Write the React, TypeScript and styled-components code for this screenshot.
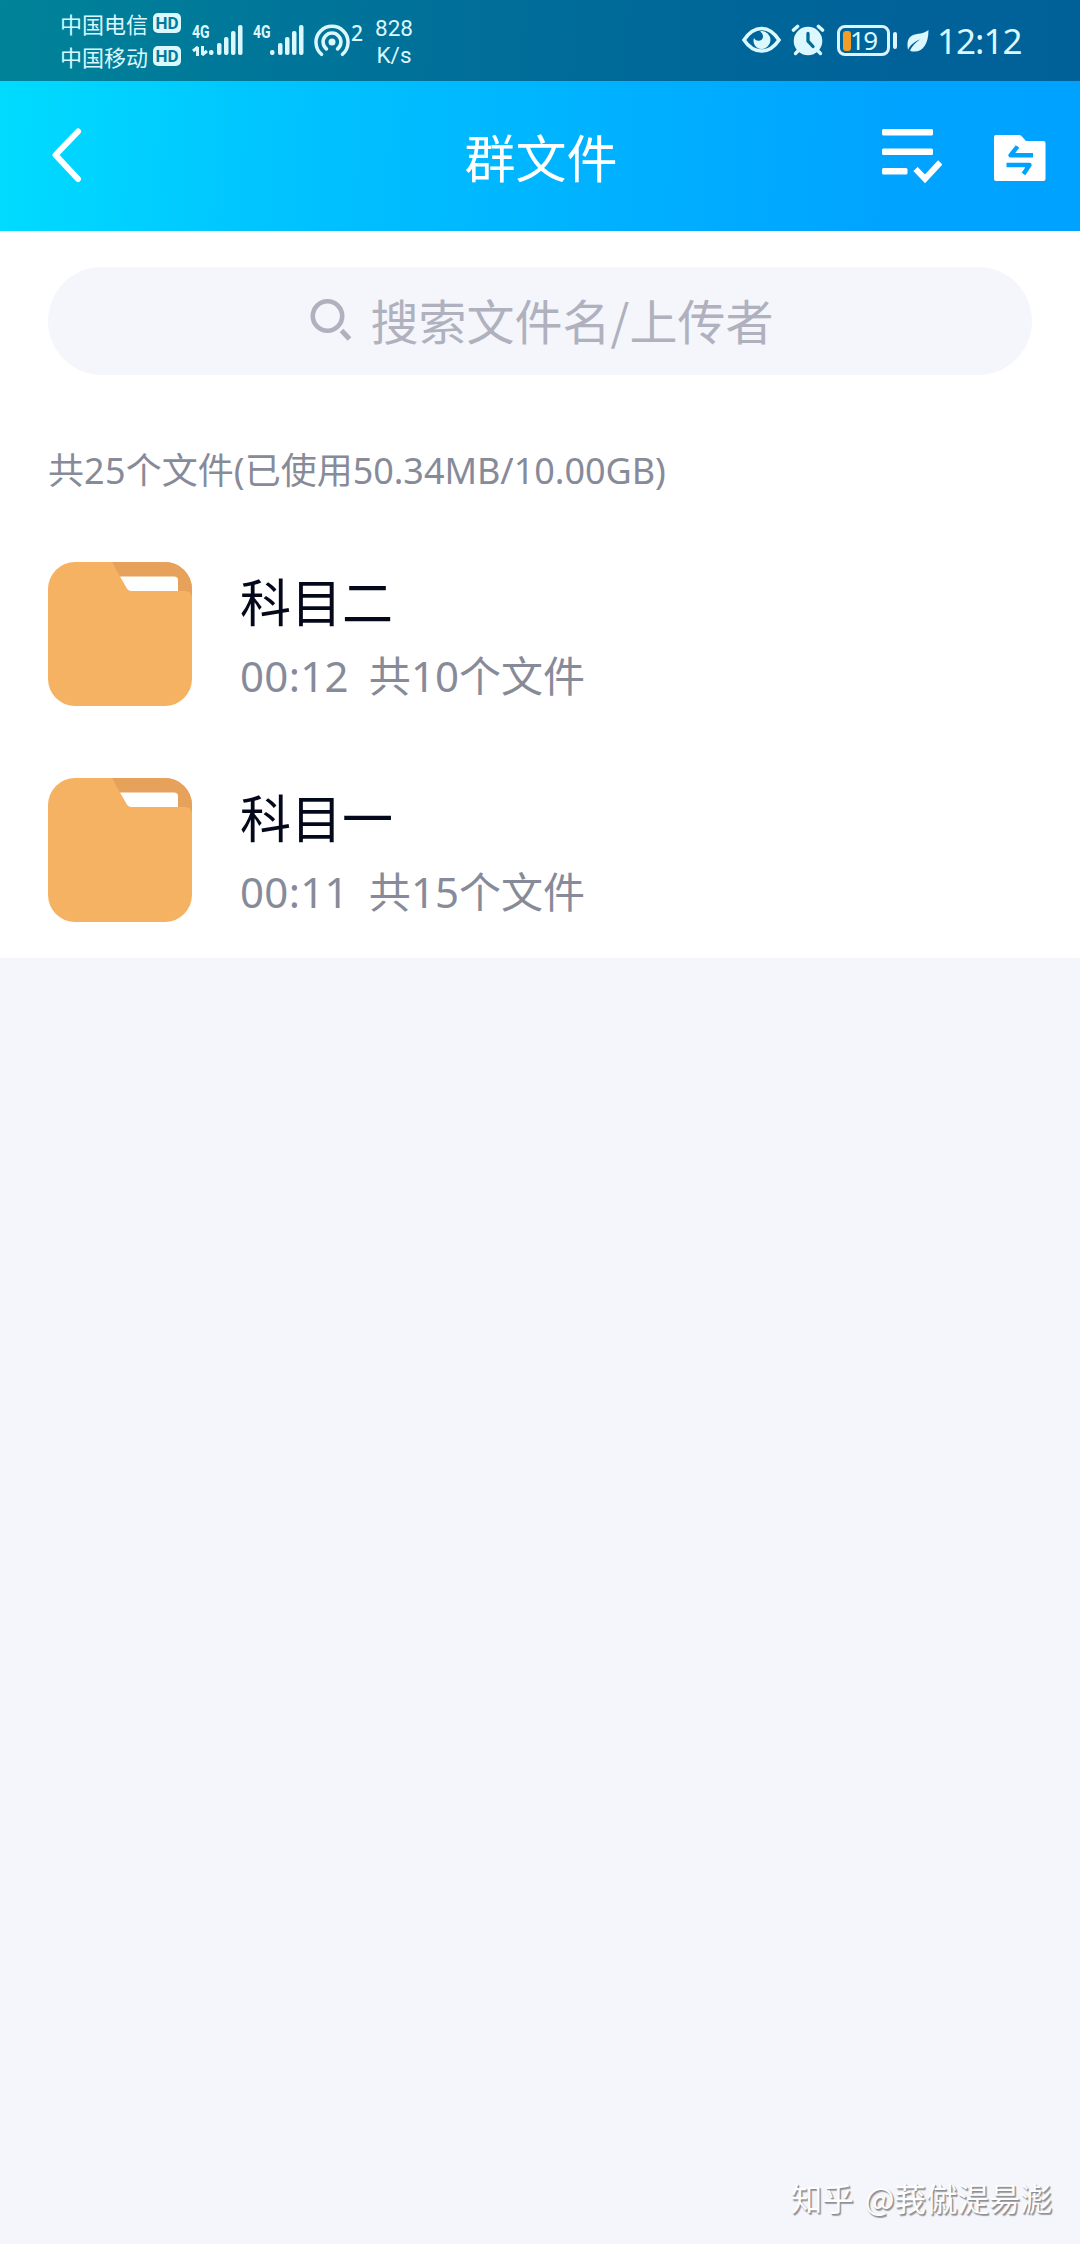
import React from "react";
import styled, { createGlobalStyle } from "styled-components";

const GlobalStyle = createGlobalStyle`
  * { box-sizing: border-box; }
  body {
    margin: 0;
    background: #f4f6fb;
    font-family: "Noto Sans CJK SC", "Noto Sans", sans-serif;
  }
  svg { display: block; flex: none; }
`;

const Screen = styled.div`
  width: 1080px;
  height: 2244px;
  display: flex;
  flex-direction: column;
  overflow: hidden;
  background: #f4f6fb;
`;

const TopArea = styled.div`
  flex: none;
  background: linear-gradient(93deg, #00dcff 0%, #00c3ff 27%, #00b2ff 55%, #00a4ff 82%, #00a2ff 100%);
`;

const StatusBar = styled.div`
  height: 81px;
  padding: 0 58px 0 60px;
  display: flex;
  justify-content: space-between;
  background: rgba(0, 0, 0, 0.4);
  color: #dcf8ff;
`;

const StatusGroup = styled.div`
  display: flex;
  align-items: flex-start;
`;

const Carriers = styled.div`
  display: flex;
  flex-direction: column;
  padding-top: 6px;
`;

const Carrier = styled.div`
  display: flex;
  align-items: center;
  gap: 5px;
  height: 33px;
  font-size: 22px;
  line-height: 32px;
`;

const HdBadge = styled.span`
  width: 28px;
  height: 20px;
  border-radius: 5px;
  background: #dcf8ff;
  color: #007c9b;
  font: 700 17px/20px Roboto, sans-serif;
  text-align: center;
`;

const Signal = styled.div<{ $gap: number }>`
  margin-left: ${(p) => p.$gap}px;
  padding-top: 22px;
  width: 51px;
  display: flex;
`;

const NetLabel = styled.div`
  width: 17px;
  display: flex;
  flex-direction: column;
  gap: 4px;
`;

const NetType = styled.span`
  font: 700 19px/19px Roboto, sans-serif;
  transform: scaleX(0.74);
  transform-origin: left;
`;

const HotspotCount = styled.span`
  margin: 21px 0 0 1px;
  width: 13px;
  font: 500 21px/24px "Noto Sans", sans-serif;
`;

const Speed = styled.div`
  margin-left: 10px;
  padding-top: 15px;
  width: 40px;
  font: 400 22.5px/27px Roboto, sans-serif;
  text-align: center;
`;

const Battery = styled.div`
  margin: 25px 0 0 12px;
  width: 53px;
  height: 31px;
  border: 3px solid #dff3ff;
  border-radius: 8px;
  padding-left: 3px;
  display: flex;
  align-items: center;
`;

const Charge = styled.span`
  flex: none;
  width: 8px;
  height: 20px;
  border-radius: 3px;
  background: #f59c25;
`;

const Percent = styled.span`
  margin-left: -1px;
  font: 400 26px/25px "Noto Sans", sans-serif;
  letter-spacing: -1.6px;
`;

const BatteryCap = styled.span`
  flex: none;
  margin: 32px 0 0 3px;
  width: 4px;
  height: 17px;
  border-radius: 2px;
  background: #dff3ff;
`;

const Clock = styled.span`
  margin-top: 17px;
  margin-left: 8px;
  width: 85px;
  font: 400 35px/48px "Noto Sans", sans-serif;
  white-space: nowrap;
  letter-spacing: -1px;
`;

const IconSlot = styled.div<{ $top: number; $left?: number }>`
  margin-top: ${(p) => p.$top}px;
  margin-left: ${(p) => p.$left ?? 0}px;
`;

const TitleBar = styled.header`
  height: 150px;
  padding: 0 34px 0 48px;
  display: grid;
  grid-template-columns: 1fr auto 1fr;
  align-items: center;
  color: #fff;
`;

const Title = styled.h1`
  margin: 0;
  transform: translateX(-6px);
  font-size: 51px;
  font-weight: 400;
  line-height: 74px;
`;

const Actions = styled.div`
  display: flex;
  justify-content: flex-end;
  gap: 52px;
`;

const Content = styled.main`
  flex: none;
  height: 727px;
  padding: 36px 48px;
  background: #fff;
`;

const SearchBox = styled.div`
  height: 108px;
  padding-left: 3px;
  border-radius: 54px;
  background: #f4f6fb;
  color: #b0b1be;
  display: flex;
  align-items: center;
  justify-content: center;
  gap: 19px;
`;

const Placeholder = styled.span`
  font-size: 48px;
  line-height: 68px;
  padding-bottom: 5px;
`;

const Summary = styled.p`
  margin: 67px 0 0;
  height: 52px;
  font-size: 36px;
  line-height: 52px;
  color: #878b99;
  white-space: nowrap;
`;

const Latin = styled.span<{ $spacing?: number }>`
  font-family: "Noto Sans", sans-serif;
  line-height: 0;
  letter-spacing: ${(p) => p.$spacing ?? 0}px;
`;

const FileList = styled.div`
  margin-top: 68px;
  display: flex;
  flex-direction: column;
  gap: 72px;
`;

const FileRow = styled.div`
  height: 144px;
  display: flex;
  gap: 48px;
`;

const FileText = styled.div`
  display: flex;
  flex-direction: column;
  padding-top: 1px;
  white-space: nowrap;
`;

const FileName = styled.div`
  font-size: 51px;
  line-height: 74px;
  color: #03081a;
`;

const FileMeta = styled.div`
  font-size: 42px;
  line-height: 74px;
  color: #878b99;
`;

const Time = styled(Latin)`
  margin-right: 20px;
`;

const Footer = styled.footer`
  margin-top: auto;
  padding: 0 28px 23px;
  text-align: right;
  font-size: 31.5px;
  line-height: 48px;
  word-spacing: 4px;
  color: #fdfdfe;
  text-shadow: 1px 1px 1px #8c8d92, 1.5px 1.5px 1px #a2a3a8;
`;

const bars = [
  [0, 28, 5],
  [8, 21, 12],
  [15, 15, 18],
  [22, 9, 24],
  [29, 3, 30],
];

function SignalMeter({ gap, data }: { gap: number; data?: boolean }) {
  return (
    <Signal $gap={gap}>
      <NetLabel>
        <NetType>4G</NetType>
        {data && (
          <svg width="16" height="12" viewBox="0 0 16 12" fill="none" stroke="currentColor" strokeWidth="3">
            <path d="M5.5 11V2M6 2 1 6M10.500 1v9M10 10l5-4" />
          </svg>
        )}
      </NetLabel>
      <svg width="34" height="34" viewBox="0 0 34 34" fill="currentColor">
        {bars.map(([x, y, h]) => (
          <rect key={x} x={x} y={y} width="4.500" height={h} rx="2" />
        ))}
      </svg>
    </Signal>
  );
}

function Hotspot() {
  return (
    <svg width="36" height="34" viewBox="0 0 36 34" fill="none" stroke="currentColor" strokeWidth="3.500" strokeLinecap="round">
      <circle cx="18" cy="18" r="3.500" fill="currentColor" stroke="none" />
      <path d="M12.500 25a8.900 8.900 0 1 1 11 0" />
      <path d="M7.500 30.300a16 16 0 1 1 21 0" />
    </svg>
  );
}

function Eye() {
  return (
    <svg width="39" height="28" viewBox="0 0 39 28" fill="none" stroke="currentColor" strokeWidth="3.600">
      <path d="M2 14C7 6.500 13 2.500 19.500 2.500S32 6.500 37 14c-5 7.500-11 11-17.500 11S7 21.500 2 14Z" />
      <path d="M18 5.500c4 2.500 4 7.500 0 9-3 .8-5-.5-6-2.500-2 5 2 11 7.500 11a9 9 0 0 0 0-18Z" fill="currentColor" stroke="none" />
    </svg>
  );
}

function Alarm() {
  return (
    <svg width="34" height="32" viewBox="0 0 34 32" fill="none" stroke="currentColor" strokeLinecap="round">
      <circle cx="17" cy="17" r="14.300" fill="currentColor" stroke="none" />
      <path d="m2.500 6 4-3.500M31.500 6l-4-3.500" strokeWidth="3.600" />
      <path d="m4.500 29.500 4-4M29.500 29.500l-4-4" strokeWidth="3.300" />
      <path d="M17 9.500V17l5 5.500" stroke="#006c99" strokeWidth="3.300" />
    </svg>
  );
}

function Leaf() {
  return (
    <svg width="22" height="23" viewBox="0 0 22 23" fill="currentColor">
      <path d="M21.500 0C21.500 15 15 22.500 6 21.500c-1.500 0-2.400-.5-3-1C5 16 8 13 13 9.500 7.500 11.500 3 15 1 20-1 9 3 5 10 4c5-.8 8.500-1.500 11.500-4Z" />
    </svg>
  );
}

function BackArrow() {
  return (
    <svg width="36" height="56" viewBox="0 0 36 56" fill="none" stroke="currentColor" strokeWidth="6" strokeLinecap="round" strokeLinejoin="round">
      <path d="M30 3.500 7.500 27 30 51" />
    </svg>
  );
}

function SelectList() {
  return (
    <svg width="60" height="56" viewBox="0 0 60 56" fill="currentColor">
      <rect y="1" width="51" height="6.500" rx="1.500" />
      <rect y="20.500" width="51" height="6.500" rx="1.500" />
      <rect y="40" width="25.500" height="6.500" rx="1.500" />
      <path d="m33.500 41 9.500 9.800 15.300-16.500" fill="none" stroke="currentColor" strokeWidth="6" />
    </svg>
  );
}

function TransferFolder() {
  return (
    <svg width="52" height="56" viewBox="0 0 52 56" fill="none">
      <path d="M2 7h23q1.500 0 2.500 1l4.500 5h17.500q2 0 2 2v36q0 2-2 2H2q-2 0-2-2V9q0-2 2-2Z" fill="currentColor" />
      <path d="M39 27.300H16.500L23.500 18.500M12.500 37H35.500L29.500 46" stroke="#00a2ff" strokeWidth="4.400" strokeLinejoin="round" />
    </svg>
  );
}

function SearchIcon() {
  return (
    <svg width="42" height="46" viewBox="0 0 42 46" fill="none" stroke="currentColor">
      <circle cx="17.500" cy="18" r="14.700" strokeWidth="4.600" />
      <path d="m31.500 32.500 8 8.500" strokeWidth="5" />
    </svg>
  );
}

function FolderIcon() {
  return (
    <svg width="144" height="144" viewBox="0 0 144 144">
      <rect width="144" height="144" rx="27" fill="#f6b263" />
      <path d="M64 0h53a27 27 0 0 1 27 27v8q-1-6-7-6H80L70 11Z" fill="#e6a15b" />
      <path d="M72 14.500h54q4 0 4 4V29H83q-3 0-4.500-3Z" fill="#fff" />
    </svg>
  );
}

const files = [
  { name: "科目二", time: "00:12", count: "10" },
  { name: "科目一", time: "00:11", count: "15" },
];

export default function App() {
  return (
    <Screen>
      <GlobalStyle />
      <TopArea>
        <StatusBar>
          <StatusGroup>
            <Carriers>
              <Carrier>中国电信<HdBadge>HD</HdBadge></Carrier>
              <Carrier>中国移动<HdBadge>HD</HdBadge></Carrier>
            </Carriers>
            <SignalMeter gap={11} data />
            <SignalMeter gap={10} />
            <IconSlot $top={24} $left={10}><Hotspot /></IconSlot>
            <HotspotCount>2</HotspotCount>
            <Speed>828<br />K/s</Speed>
          </StatusGroup>
          <StatusGroup>
            <IconSlot $top={26}><Eye /></IconSlot>
            <IconSlot $top={24} $left={10}><Alarm /></IconSlot>
            <Battery><Charge /><Percent>19</Percent></Battery>
            <BatteryCap />
            <IconSlot $top={30} $left={10}><Leaf /></IconSlot>
            <Clock>12:12</Clock>
          </StatusGroup>
        </StatusBar>
        <TitleBar>
          <BackArrow />
          <Title>群文件</Title>
          <Actions><SelectList /><TransferFolder /></Actions>
        </TitleBar>
      </TopArea>
      <Content>
        <SearchBox>
          <SearchIcon />
          <Placeholder>搜索文件名/上传者</Placeholder>
        </SearchBox>
        <Summary>
          共<Latin $spacing={0.3}>25</Latin>个文件<Latin>(</Latin>已使用<Latin $spacing={-0.05}>50.34MB/10.00GB)</Latin>
        </Summary>
        <FileList>
          {files.map((file) => (
            <FileRow key={file.name}>
              <FolderIcon />
              <FileText>
                <FileName>{file.name}</FileName>
                <FileMeta>
                  <Time $spacing={0.3}>{file.time}</Time>
                  共<Latin $spacing={0}>{file.count}</Latin>个文件
                </FileMeta>
              </FileText>
            </FileRow>
          ))}
        </FileList>
      </Content>
      <Footer>知乎 @莪僦湜昜滮</Footer>
    </Screen>
  );
}
